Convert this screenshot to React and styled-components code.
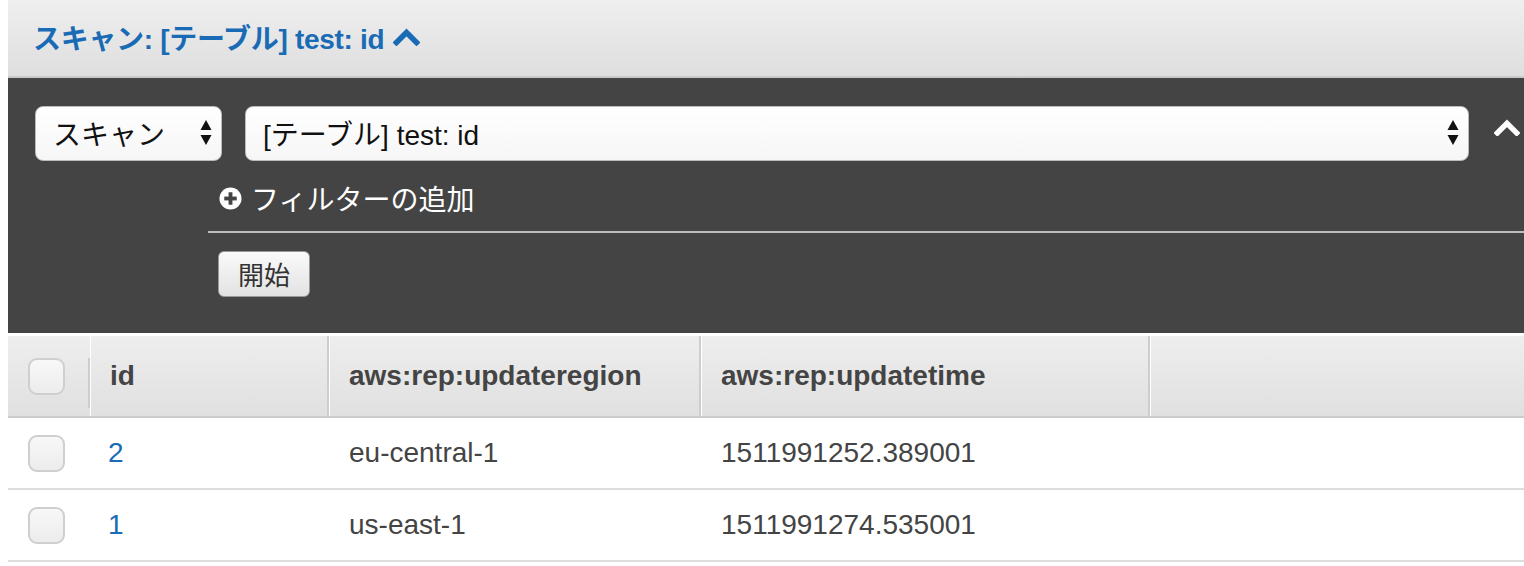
import React from 'react';
import styled, { createGlobalStyle } from 'styled-components';

const columns = [
  { key: 'id', label: 'id' },
  { key: 'region', label: 'aws:rep:updateregion' },
  { key: 'time', label: 'aws:rep:updatetime' },
];

const rows = [
  { id: '2', region: 'eu-central-1', time: '1511991252.389001' },
  { id: '1', region: 'us-east-1', time: '1511991274.535001' },
];

const Chevron = ({ color, size = 24, weight = 5 }) => (
  <svg width={size} height={size * 0.66} viewBox="0 0 24 16">
    <polyline
      points="3,13 12,4 21,13"
      fill="none"
      stroke={color}
      strokeWidth={weight}
      strokeLinecap="square"
    />
  </svg>
);

const SelectArrows = () => (
  <svg width="12" height="28" viewBox="0 0 12 28">
    <polygon points="6,1 11.5,11 0.5,11" fill="#111" />
    <polygon points="0.5,16 11.5,16 6,26" fill="#111" />
  </svg>
);

const PlusCircle = () => (
  <svg width="23" height="23" viewBox="0 0 24 24">
    <circle cx="12" cy="12" r="11.5" fill="#fff" />
    <rect x="10" y="5.5" width="4" height="13" fill="#444" />
    <rect x="5.5" y="10" width="13" height="4" fill="#444" />
  </svg>
);

class App extends React.Component {
  render() {
    return (
      <React.Fragment>
        <GlobalStyle />
        <Page>
          <Header>
            <Title>
              スキャン: [テーブル] test: id
              <Chevron color="#1a6bb5" size={27} weight={5} />
            </Title>
          </Header>
          <Panel>
            <SelectRow>
              <SelectBox width="187px">
                <span>スキャン</span>
                <SelectArrows />
              </SelectBox>
              <SelectBox grow>
                <span>[テーブル] test: id</span>
                <SelectArrows />
              </SelectBox>
              <Collapse>
                <Chevron color="#fff" size={26} weight={5} />
              </Collapse>
            </SelectRow>
            <FilterArea>
              <AddFilter>
                <PlusCircle />
                フィルターの追加
              </AddFilter>
              <Divider />
              <StartButton>開始</StartButton>
            </FilterArea>
          </Panel>
          <Table>
            <HeadRow>
              <HeadCell first>
                <Checkbox />
              </HeadCell>
              {columns.map(({ key, label }) => (
                <HeadCell key={key}>{label}</HeadCell>
              ))}
              <HeadCell last />
            </HeadRow>
            {rows.map(row => (
              <BodyRow key={row.id}>
                <Cell>
                  <Checkbox />
                </Cell>
                <Cell link>{row.id}</Cell>
                <Cell>{row.region}</Cell>
                <Cell>{row.time}</Cell>
                <Cell />
              </BodyRow>
            ))}
          </Table>
        </Page>
      </React.Fragment>
    );
  }
}

const GlobalStyle = createGlobalStyle`
  html, body {
    margin: 0;
    padding: 0;
    background: #fff;
  }
  body {
    font-family: "Liberation Sans", "Noto Sans CJK JP", sans-serif;
    color: #444;
  }
`;

const Page = styled.div`
  margin-left: 8px;
  width: 1516px;
`;

const Header = styled.div`
  height: 76px;
  display: flex;
  align-items: center;
  padding-left: 25px;
  padding-bottom: 2px;
  box-sizing: border-box;
  background: linear-gradient(#efefef, #dedede);
  border-bottom: 2px solid #c9c9c9;
  height: 78px;
`;

const Title = styled.h1`
  margin: 0;
  display: flex;
  align-items: center;
  gap: 9px;
  font-size: 28px;
  font-weight: bold;
  color: #1a6bb5;
  letter-spacing: -0.3px;
`;

const Panel = styled.div`
  background: #444;
  height: 255px;
  box-sizing: border-box;
  padding-top: 28px;
`;

const SelectRow = styled.div`
  display: flex;
  align-items: center;
  padding-left: 27px;
  gap: 23px;
`;

const SelectBox = styled.div`
  box-sizing: border-box;
  height: 55px;
  width: ${p => p.width || 'auto'};
  flex: ${p => (p.grow ? '1' : 'none')};
  display: flex;
  align-items: center;
  justify-content: space-between;
  padding: 0 9px 2px 17px;
  background: linear-gradient(#ffffff, #f6f6f6);
  border: 1px solid #bbb;
  border-radius: 8px;
  font-size: 28px;
  color: #111;
`;

const Collapse = styled.div`
  box-sizing: border-box;
  width: 32px;
  flex: none;
  display: flex;
  justify-content: flex-end;
  padding-right: 4px;
  margin-bottom: 12px;
`;

const FilterArea = styled.div`
  margin-left: 200px;
  padding-top: 20px;
`;

const AddFilter = styled.div`
  display: flex;
  align-items: center;
  gap: 9px;
  padding-left: 11px;
  color: #fff;
  font-size: 28px;
  height: 34px;
`;

const Divider = styled.div`
  height: 2px;
  background: #bdbdbd;
  margin: 16px 0 18px;
`;

const StartButton = styled.button`
  margin-left: 10px;
  width: 92px;
  height: 46px;
  border: 1px solid #999;
  border-radius: 6px;
  background: linear-gradient(#fafafa, #e2e2e2);
  font-family: "Liberation Sans", "Noto Sans CJK JP", sans-serif;
  font-size: 26px;
  color: #333;
  padding: 0 0 2px;
`;

const Table = styled.div`
  margin-top: 3px;
`;

const gridColumns = '82px 239px 372px 449px 1fr';

const HeadRow = styled.div`
  display: grid;
  grid-template-columns: ${gridColumns};
  height: 80px;
  background: linear-gradient(#eeeeee, #e0e0e0);
  border-bottom: 2px solid #cccccc;
`;

const HeadCell = styled.div`
  position: relative;
  display: flex;
  align-items: center;
  box-sizing: border-box;
  padding-left: 20px;
  font-size: 28px;
  font-weight: bold;
  color: #444;
  border-right: ${p => (p.first || p.last ? 'none' : '2px solid #cdcdcd')};
  box-shadow: ${p => (p.first ? 'none' : 'inset 1px 0 0 #fff')};

  ${p =>
    p.first &&
    `
    &::after {
      content: '';
      position: absolute;
      right: 0;
      top: 22px;
      bottom: 8px;
      width: 2px;
      background: #cdcdcd;
    }
  `}
`;

const BodyRow = styled.div`
  display: grid;
  grid-template-columns: ${gridColumns};
  height: 70px;
  border-bottom: 2px solid #dddddd;
`;

const Cell = styled.div`
  display: flex;
  align-items: center;
  padding-left: ${p => (p.link ? '18px' : '20px')};
  font-size: 28px;
  color: ${p => (p.link ? '#1a6bb5' : '#444')};
`;

const Checkbox = styled.div`
  width: 37px;
  height: 37px;
  box-sizing: border-box;
  border: 2px solid #cfcfcf;
  border-radius: 9px;
  background: linear-gradient(#f8f8f8, #ececec);
`;

export default App;
